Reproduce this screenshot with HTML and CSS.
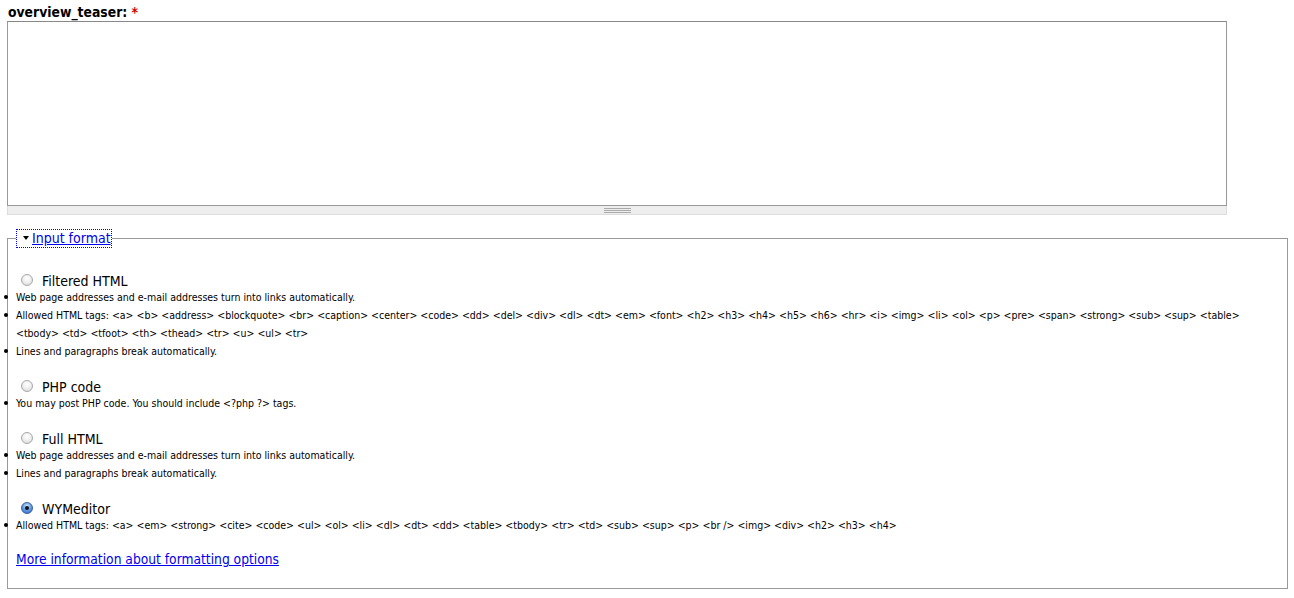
FILE: index.html
```html
<!DOCTYPE html>
<html>
<head>
<meta charset="utf-8">
<link rel="stylesheet" href="styles.css">
</head>
<body>
<div class="page">
  <div class="form-item">
    <label class="label">overview_teaser: <span class="req">*</span></label>
    <div class="resizable">
      <textarea class="textarea"></textarea>
      <div class="grippie"><span class="grip-lines"></span></div>
    </div>
  </div>
  <fieldset class="fs">
    <legend class="legend"><a href="#" class="toggle"><span class="arrow"></span>Input format</a></legend>
    <div class="fs-body">
      <div class="opt">
        <label class="radio-label"><span class="radio"></span>Filtered HTML</label>
        <ul class="tips">
          <li>Web page addresses and e-mail addresses turn into links automatically.</li>
          <li>Allowed HTML tags: &lt;a&gt; &lt;b&gt; &lt;address&gt; &lt;blockquote&gt; &lt;br&gt; &lt;caption&gt; &lt;center&gt; &lt;code&gt; &lt;dd&gt; &lt;del&gt; &lt;div&gt; &lt;dl&gt; &lt;dt&gt; &lt;em&gt; &lt;font&gt; &lt;h2&gt; &lt;h3&gt; &lt;h4&gt; &lt;h5&gt; &lt;h6&gt; &lt;hr&gt; &lt;i&gt; &lt;img&gt; &lt;li&gt; &lt;ol&gt; &lt;p&gt; &lt;pre&gt; &lt;span&gt; &lt;strong&gt; &lt;sub&gt; &lt;sup&gt; &lt;table&gt; &lt;tbody&gt; &lt;td&gt; &lt;tfoot&gt; &lt;th&gt; &lt;thead&gt; &lt;tr&gt; &lt;u&gt; &lt;ul&gt; &lt;tr&gt;</li>
          <li>Lines and paragraphs break automatically.</li>
        </ul>
      </div>
      <div class="opt">
        <label class="radio-label"><span class="radio"></span>PHP code</label>
        <ul class="tips">
          <li>You may post PHP code. You should include &lt;?php ?&gt; tags.</li>
        </ul>
      </div>
      <div class="opt">
        <label class="radio-label"><span class="radio"></span>Full HTML</label>
        <ul class="tips">
          <li>Web page addresses and e-mail addresses turn into links automatically.</li>
          <li>Lines and paragraphs break automatically.</li>
        </ul>
      </div>
      <div class="opt">
        <label class="radio-label"><span class="radio checked"></span>WYMeditor</label>
        <ul class="tips">
          <li>Allowed HTML tags: &lt;a&gt; &lt;em&gt; &lt;strong&gt; &lt;cite&gt; &lt;code&gt; &lt;ul&gt; &lt;ol&gt; &lt;li&gt; &lt;dl&gt; &lt;dt&gt; &lt;dd&gt; &lt;table&gt; &lt;tbody&gt; &lt;tr&gt; &lt;td&gt; &lt;sub&gt; &lt;sup&gt; &lt;p&gt; &lt;br /&gt; &lt;img&gt; &lt;div&gt; &lt;h2&gt; &lt;h3&gt; &lt;h4&gt;</li>
        </ul>
      </div>
      <p class="more"><a href="#" class="link">More information about formatting options</a></p>
    </div>
  </fieldset>
</div>
</body>
</html>
```
FILE: styles.css
```css
html, body {
  margin: 0;
  padding: 0;
  background: #fff;
}
body {
  font-family: "DejaVu Sans Condensed", "DejaVu Sans", sans-serif;
  font-stretch: condensed;
  color: #000;
}
.page {
  padding: 4px 6px 0 7px;
}
.label {
  display: block;
  font-weight: bold;
  font-size: 13.8px;
  line-height: 17px;
  padding-left: 1px;
}
.req {
  color: #c00;
}
.resizable {
  width: 1220px;
}
.textarea {
  display: block;
  box-sizing: border-box;
  width: 1220px;
  height: 185px;
  margin: 0;
  border: 1px solid #999;
  border-top-color: #888;
  resize: none;
  outline: none;
  background: #fff;
}
.grippie {
  box-sizing: border-box;
  height: 9px;
  background: #eee;
  border: 1px solid #ddd;
  border-top: none;
  display: flex;
  justify-content: center;
  padding-top: 2px;
}
.grip-lines {
  display: block;
  width: 27px;
  height: 5px;
  background: repeating-linear-gradient(#aaa 0 1px, transparent 1px 2px);
}
.fs {
  margin: 15px 0 0 0;
  padding: 0 8px 20px 8px;
  border: 1px solid #999;
  width: 1263px;
  box-sizing: content-box;
}
.legend {
  padding: 0 1px;
  font-size: 14px;
  line-height: 16px;
}
.toggle {
  display: inline-block;
  color: #00e;
  outline: 1px dotted #00e;
  text-decoration: underline;
  padding: 0 0 1px 0;
}
.arrow {
  display: inline-block;
  width: 0;
  height: 0;
  border-left: 3.5px solid transparent;
  border-right: 3.5px solid transparent;
  border-top: 4px solid #000;
  margin: 0 3px 0 6px;
  vertical-align: 3px;
}
.fs-body {
  display: flex;
  flex-direction: column;
  gap: 16px;
  padding-top: 23px;
}
.opt {
  display: flex;
  flex-direction: column;
}
.radio-label {
  display: flex;
  align-items: center;
  font-size: 14px;
  line-height: 18px;
  height: 18px;
  padding-left: 5px;
  margin-top: 2px;
  margin-bottom: -2px;
}
.radio {
  box-sizing: border-box;
  width: 12px;
  height: 12px;
  border-radius: 50%;
  border: 1px solid #a8a8a8;
  background: radial-gradient(circle at 50% 35%, #fff 0, #f2f2f2 40%, #d4d4d4 100%);
  margin-right: 9px;
  margin-top: -2px;
  display: flex;
  align-items: center;
  justify-content: center;
}
.radio.checked {
  border-color: #3a5f9c;
  background: radial-gradient(circle at 50% 30%, #cfe3fb 0, #6aa0e6 45%, #2a66c2 100%);
}
.radio.checked::after {
  content: "";
  width: 4px;
  height: 4px;
  border-radius: 50%;
  background: #111;
}
.tips {
  margin: 0;
  padding: 0;
  font-size: 10.5px;
  line-height: 18px;
  list-style: none;
}
.tips li {
  position: relative;
}
.tips li::before {
  content: "";
  position: absolute;
  left: -12px;
  top: 7px;
  width: 4px;
  height: 4px;
  border-radius: 50%;
  background: #000;
}
.more {
  margin: 0;
  font-size: 13.7px;
  line-height: 18px;
}
.link {
  color: #00e;
}
```
